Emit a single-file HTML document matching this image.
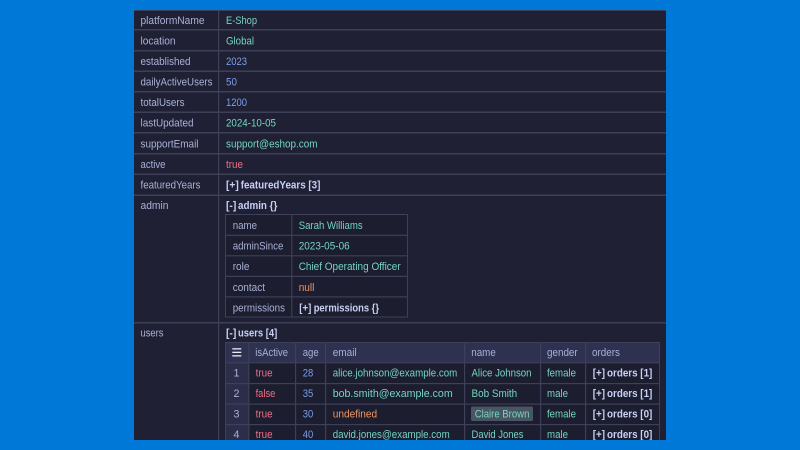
<!DOCTYPE html>
<html><head><meta charset="utf-8"><style>
html,body{margin:0;padding:0;background:#0078d7;width:800px;height:450px;overflow:hidden}
svg{display:block;position:absolute;left:0;top:0;filter:blur(0.3px)}
text{font-family:"Liberation Sans",sans-serif;font-size:10.7px}
.k{fill:#a9b1d6}.s{fill:#73d5c2}.n{fill:#7a9ee8}.t{fill:#ee7088}.o{fill:#ee9562}
.b{fill:#c8d0f5;font-weight:bold}.m{fill:#c0caf5}
</style></head><body>
<svg width="800" height="450" viewBox="0 0 800 450" xmlns="http://www.w3.org/2000/svg">
<defs><clipPath id="c"><rect x="134" y="10" width="532" height="430"/></clipPath></defs>
<g clip-path="url(#c)">
<rect x="134" y="10" width="532" height="430" fill="#1f2033"/>
<g fill="#3d4058">
<rect x="134" y="10" width="532" height="1"/>
<rect x="134" y="29" width="532" height="1.5"/><rect x="134" y="50" width="532" height="1.5"/><rect x="134" y="70.5" width="532" height="1.5"/><rect x="134" y="91" width="532" height="1.5"/><rect x="134" y="111.5" width="532" height="1.5"/><rect x="134" y="132" width="532" height="1.5"/><rect x="134" y="153" width="532" height="1.5"/><rect x="134" y="173.5" width="532" height="1.5"/><rect x="134" y="194.5" width="532" height="1.5"/><rect x="134" y="322" width="532" height="1.5"/>
<rect x="218" y="10" width="1.2" height="430"/>
</g>
<!-- admin table -->
<rect x="225.5" y="214.5" width="182" height="102.5" fill="#1c1d2e" stroke="#3d4058"/>
<g fill="#3d4058"><rect x="291.2" y="214" width="1.2" height="103"/><rect x="225" y="234.7" width="183" height="1.2"/><rect x="225" y="255.2" width="183" height="1.2"/><rect x="225" y="275.8" width="183" height="1.2"/><rect x="225" y="296.3" width="183" height="1.2"/></g>
<!-- users table -->
<rect x="225.5" y="342.5" width="434" height="110" fill="#1c1d2e"/>
<rect x="225.5" y="342.5" width="434" height="20" fill="#2e3150"/>
<rect x="225.5" y="362" width="23" height="90" fill="#2c2e49"/>
<g fill="#3d4058"><rect x="225" y="342" width="435" height="1"/><rect x="225" y="362.2" width="435" height="1.2"/><rect x="225" y="383" width="435" height="1.2"/><rect x="225" y="403.5" width="435" height="1.2"/><rect x="225" y="424" width="435" height="1.2"/>
<rect x="225" y="342" width="1" height="100"/><rect x="248.2" y="342" width="1.2" height="100"/><rect x="295" y="342" width="1.2" height="100"/><rect x="325" y="342" width="1.2" height="100"/><rect x="464" y="342" width="1.2" height="100"/><rect x="540" y="342" width="1.2" height="100"/><rect x="585" y="342" width="1.2" height="100"/><rect x="659" y="342" width="1" height="100"/></g>
<rect x="232.3" y="348.2" width="9" height="1.3" fill="#e8eaf6"/><rect x="232.3" y="351.7" width="9" height="1.3" fill="#e8eaf6"/><rect x="232.3" y="355.2" width="9" height="1.3" fill="#e8eaf6"/>
<rect x="471" y="406.5" width="62" height="14.5" rx="1.5" fill="#4a5563"/>

<g>
<text class="k" x="140.5" y="24" textLength="64" lengthAdjust="spacingAndGlyphs">platformName</text>
<text class="k" x="140.5" y="44.5" textLength="35" lengthAdjust="spacingAndGlyphs">location</text>
<text class="k" x="140.5" y="65" textLength="50" lengthAdjust="spacingAndGlyphs">established</text>
<text class="k" x="140.5" y="85.5" textLength="72" lengthAdjust="spacingAndGlyphs">dailyActiveUsers</text>
<text class="k" x="140.5" y="106" textLength="44" lengthAdjust="spacingAndGlyphs">totalUsers</text>
<text class="k" x="140.5" y="126.5" textLength="53" lengthAdjust="spacingAndGlyphs">lastUpdated</text>
<text class="k" x="140.5" y="147.5" textLength="58" lengthAdjust="spacingAndGlyphs">supportEmail</text>
<text class="k" x="140.5" y="168" textLength="25" lengthAdjust="spacingAndGlyphs">active</text>
<text class="k" x="140.5" y="188.5" textLength="60" lengthAdjust="spacingAndGlyphs">featuredYears</text>
<text class="k" x="140.5" y="209" textLength="28" lengthAdjust="spacingAndGlyphs">admin</text>
<text class="k" x="140.5" y="336.5" textLength="23" lengthAdjust="spacingAndGlyphs">users</text>

<text class="s" x="226" y="24" textLength="31" lengthAdjust="spacingAndGlyphs">E-Shop</text>
<text class="s" x="226" y="44.5" textLength="28" lengthAdjust="spacingAndGlyphs">Global</text>
<text class="n" x="226" y="65" textLength="21" lengthAdjust="spacingAndGlyphs">2023</text>
<text class="n" x="226" y="85.5" textLength="11" lengthAdjust="spacingAndGlyphs">50</text>
<text class="n" x="226" y="106" textLength="21" lengthAdjust="spacingAndGlyphs">1200</text>
<text class="s" x="226" y="126.5" textLength="50" lengthAdjust="spacingAndGlyphs">2024-10-05</text>
<text class="s" x="226" y="147.5" textLength="91.5" lengthAdjust="spacingAndGlyphs">support@eshop.com</text>
<text class="t" x="226" y="168" textLength="17" lengthAdjust="spacingAndGlyphs">true</text>
<text class="b" x="226" y="188.5" textLength="12.7" lengthAdjust="spacingAndGlyphs">[+]</text>
<text class="b" x="240.7" y="188.5" textLength="79.7" lengthAdjust="spacingAndGlyphs">featuredYears [3]</text>
<text class="b" x="226" y="209" textLength="10.3" lengthAdjust="spacingAndGlyphs">[-]</text>
<text class="b" x="238" y="209" textLength="39.3" lengthAdjust="spacingAndGlyphs">admin {}</text>

<text class="k" x="232.7" y="229" textLength="24.3" lengthAdjust="spacingAndGlyphs">name</text>
<text class="k" x="232.7" y="249.5" textLength="50.7" lengthAdjust="spacingAndGlyphs">adminSince</text>
<text class="k" x="232.7" y="270" textLength="16.7" lengthAdjust="spacingAndGlyphs">role</text>
<text class="k" x="232.7" y="291" textLength="32.3" lengthAdjust="spacingAndGlyphs">contact</text>
<text class="k" x="232.7" y="311.5" textLength="52.3" lengthAdjust="spacingAndGlyphs">permissions</text>
<text class="s" x="298.7" y="229" textLength="64" lengthAdjust="spacingAndGlyphs">Sarah Williams</text>
<text class="s" x="298.7" y="249.5" textLength="51" lengthAdjust="spacingAndGlyphs">2023-05-06</text>
<text class="s" x="298.7" y="270" textLength="102" lengthAdjust="spacingAndGlyphs">Chief Operating Officer</text>
<text class="o" x="298.7" y="291" textLength="15.7" lengthAdjust="spacingAndGlyphs">null</text>
<text class="b" x="299.3" y="311.5" textLength="12" lengthAdjust="spacingAndGlyphs">[+]</text>
<text class="b" x="313.7" y="311.5" textLength="65.3" lengthAdjust="spacingAndGlyphs">permissions {}</text>

<text class="b" x="226" y="336.5" textLength="10.3" lengthAdjust="spacingAndGlyphs">[-]</text>
<text class="b" x="238" y="336.5" textLength="39.3" lengthAdjust="spacingAndGlyphs">users [4]</text>

<text class="k" x="255.3" y="356" textLength="32.7" lengthAdjust="spacingAndGlyphs">isActive</text>
<text class="k" x="302.7" y="356" textLength="16" lengthAdjust="spacingAndGlyphs">age</text>
<text class="k" x="332.7" y="356" textLength="24" lengthAdjust="spacingAndGlyphs">email</text>
<text class="k" x="471.3" y="356" textLength="24.5" lengthAdjust="spacingAndGlyphs">name</text>
<text class="k" x="547" y="356" textLength="30.7" lengthAdjust="spacingAndGlyphs">gender</text>
<text class="k" x="592" y="356" textLength="28" lengthAdjust="spacingAndGlyphs">orders</text>

<text class="k" x="233.5" y="376.5">1</text>
<text class="t" x="255.6" y="376.5" textLength="17" lengthAdjust="spacingAndGlyphs">true</text>
<text class="n" x="302.7" y="376.5" textLength="10.5" lengthAdjust="spacingAndGlyphs">28</text>
<text class="s" x="332.7" y="376.5" textLength="124.6" lengthAdjust="spacingAndGlyphs">alice.johnson@example.com</text>
<text class="s" x="471.5" y="376.5" textLength="60" lengthAdjust="spacingAndGlyphs">Alice Johnson</text>
<text class="s" x="547" y="376.5" textLength="29" lengthAdjust="spacingAndGlyphs">female</text>
<text class="b" x="592.7" y="376.5" textLength="12.3" lengthAdjust="spacingAndGlyphs">[+]</text>
<text class="b" x="607" y="376.5" textLength="45.3" lengthAdjust="spacingAndGlyphs">orders [1]</text>

<text class="k" x="233.5" y="397">2</text>
<text class="t" x="255.6" y="397" textLength="19.7" lengthAdjust="spacingAndGlyphs">false</text>
<text class="n" x="302.7" y="397" textLength="10.5" lengthAdjust="spacingAndGlyphs">35</text>
<text class="s" x="332.7" y="397" textLength="120" lengthAdjust="spacingAndGlyphs">bob.smith@example.com</text>
<text class="s" x="471.5" y="397" textLength="45.7" lengthAdjust="spacingAndGlyphs">Bob Smith</text>
<text class="s" x="547" y="397" textLength="21" lengthAdjust="spacingAndGlyphs">male</text>
<text class="b" x="592.7" y="397" textLength="12.3" lengthAdjust="spacingAndGlyphs">[+]</text>
<text class="b" x="607" y="397" textLength="45.3" lengthAdjust="spacingAndGlyphs">orders [1]</text>

<text class="k" x="233.5" y="417.5">3</text>
<text class="t" x="255.6" y="417.5" textLength="17" lengthAdjust="spacingAndGlyphs">true</text>
<text class="n" x="302.7" y="417.5" textLength="10.5" lengthAdjust="spacingAndGlyphs">30</text>
<text class="o" x="332.7" y="417.5" textLength="44.5" lengthAdjust="spacingAndGlyphs">undefined</text>
<text class="s" x="474.7" y="417.5" textLength="54.7" lengthAdjust="spacingAndGlyphs">Claire Brown</text>
<text class="s" x="547" y="417.5" textLength="29" lengthAdjust="spacingAndGlyphs">female</text>
<text class="b" x="592.7" y="417.5" textLength="12.3" lengthAdjust="spacingAndGlyphs">[+]</text>
<text class="b" x="607" y="417.5" textLength="45.3" lengthAdjust="spacingAndGlyphs">orders [0]</text>

<text class="k" x="233.5" y="438">4</text>
<text class="t" x="255.6" y="438" textLength="17" lengthAdjust="spacingAndGlyphs">true</text>
<text class="n" x="302.7" y="438" textLength="10.5" lengthAdjust="spacingAndGlyphs">40</text>
<text class="s" x="332.7" y="438" textLength="117" lengthAdjust="spacingAndGlyphs">david.jones@example.com</text>
<text class="s" x="471.5" y="438" textLength="52" lengthAdjust="spacingAndGlyphs">David Jones</text>
<text class="s" x="547" y="438" textLength="21" lengthAdjust="spacingAndGlyphs">male</text>
<text class="b" x="592.7" y="438" textLength="12.3" lengthAdjust="spacingAndGlyphs">[+]</text>
<text class="b" x="607" y="438" textLength="45.3" lengthAdjust="spacingAndGlyphs">orders [0]</text>
</g>
</g>
</svg>
</body></html>
